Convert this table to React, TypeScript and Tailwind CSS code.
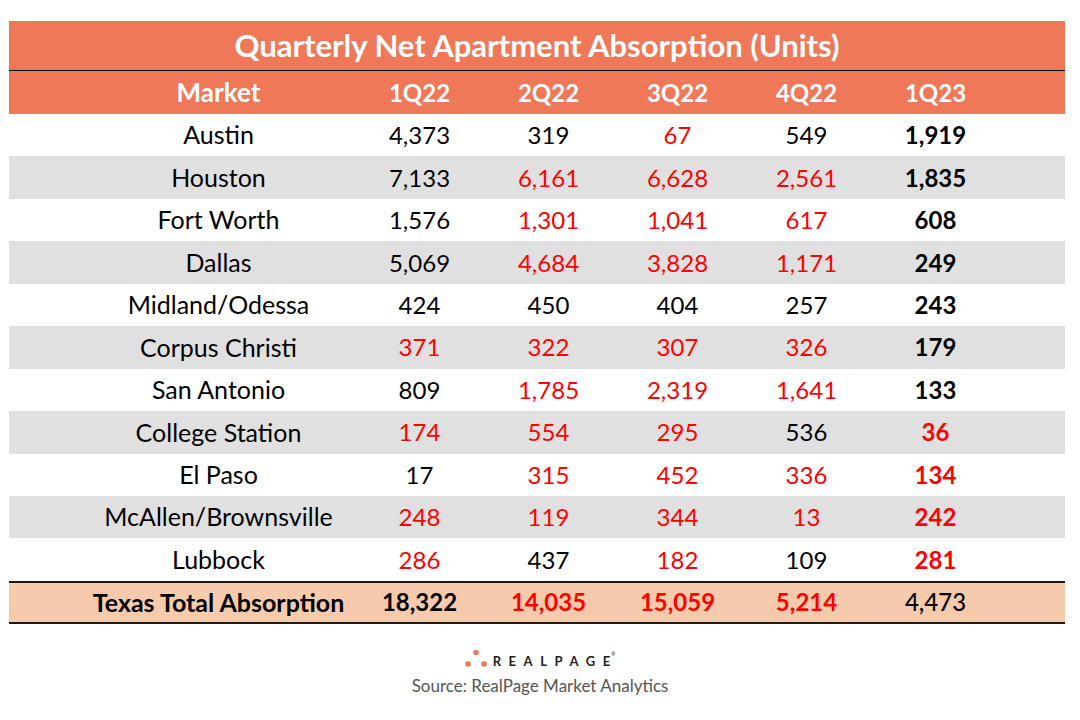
import React from "react";

type Cell = { v: string; red?: boolean };

const rows: { market: string; cells: Cell[]; last: Cell }[] = [
  { market: "Austin", cells: [{ v: "4,373" }, { v: "319" }, { v: "67", red: true }, { v: "549" }], last: { v: "1,919" } },
  { market: "Houston", cells: [{ v: "7,133" }, { v: "6,161", red: true }, { v: "6,628", red: true }, { v: "2,561", red: true }], last: { v: "1,835" } },
  { market: "Fort Worth", cells: [{ v: "1,576" }, { v: "1,301", red: true }, { v: "1,041", red: true }, { v: "617", red: true }], last: { v: "608" } },
  { market: "Dallas", cells: [{ v: "5,069" }, { v: "4,684", red: true }, { v: "3,828", red: true }, { v: "1,171", red: true }], last: { v: "249" } },
  { market: "Midland/Odessa", cells: [{ v: "424" }, { v: "450" }, { v: "404" }, { v: "257" }], last: { v: "243" } },
  { market: "Corpus Christi", cells: [{ v: "371", red: true }, { v: "322", red: true }, { v: "307", red: true }, { v: "326", red: true }], last: { v: "179" } },
  { market: "San Antonio", cells: [{ v: "809" }, { v: "1,785", red: true }, { v: "2,319", red: true }, { v: "1,641", red: true }], last: { v: "133" } },
  { market: "College Station", cells: [{ v: "174", red: true }, { v: "554", red: true }, { v: "295", red: true }, { v: "536" }], last: { v: "36", red: true } },
  { market: "El Paso", cells: [{ v: "17" }, { v: "315", red: true }, { v: "452", red: true }, { v: "336", red: true }], last: { v: "134", red: true } },
  { market: "McAllen/Brownsville", cells: [{ v: "248", red: true }, { v: "119", red: true }, { v: "344", red: true }, { v: "13", red: true }], last: { v: "242", red: true } },
  { market: "Lubbock", cells: [{ v: "286", red: true }, { v: "437" }, { v: "182", red: true }, { v: "109" }], last: { v: "281", red: true } },
];

const totals: Cell[] = [
  { v: "18,322" },
  { v: "14,035", red: true },
  { v: "15,059", red: true },
  { v: "5,214", red: true },
  { v: "4,473" },
];

const grid = "grid grid-cols-[73px_273px_129px_129px_129px_129px_129px_65px] items-center";

export default function App() {
  return (
    <div className="w-[1080px] h-[720px] bg-white pt-[21px] px-[9px] font-['Lato','Liberation_Sans',sans-serif] text-black">
      <div className="w-[1056px]">
        {/* title */}
        <div className="h-[50px] bg-[#ee7858] border-b border-black flex items-center justify-center text-white text-[31px] font-bold">
          Quarterly Net Apartment Absorption (Units)
        </div>
        {/* header */}
        <div className={`${grid} h-[43px] bg-[#ee7858] text-white text-[24px] font-bold text-center`}>
          <div />
          <div className="text-[26px]">Market</div>
          <div>1Q22</div>
          <div>2Q22</div>
          <div>3Q22</div>
          <div>4Q22</div>
          <div>1Q23</div>
          <div />
        </div>

        {rows.map((r, i) => (
          <div
            key={r.market}
            className={`${grid} h-[42.45px] text-[24px] text-center ${i % 2 === 1 ? "bg-[#e0e0e0]" : "bg-white"}`}
          >
            <div />
            <div className="text-[25px]">{r.market}</div>
            {r.cells.map((c, j) => (
              <div key={j} className={c.red ? "text-[#ff0000]" : ""}>
                {c.v}
              </div>
            ))}
            <div className={`font-bold ${r.last.red ? "text-[#ff0000]" : ""}`}>{r.last.v}</div>
            <div />
          </div>
        ))}

        {/* total */}
        <div className={`${grid} h-[43px] bg-[#f6cbac] border-y-2 border-[#1a1a1a] text-[24px] text-center`}>
          <div />
          <div className="font-bold text-[25px]">Texas Total Absorption</div>
          {totals.map((c, j) => (
            <div
              key={j}
              className={`${j < 4 ? "font-bold" : "font-medium"} ${c.red ? "text-[#ff0000]" : ""}`}
            >
              {c.v}
            </div>
          ))}
          <div />
        </div>
      </div>

      {/* footer */}
      <div className="flex flex-col items-center mt-[25px]">
        <div className="flex items-center">
          <svg width="22" height="18" viewBox="0 0 22 18" className="mr-[6px]">
            <circle cx="11" cy="3.5" r="2.8" fill="#ee7858" />
            <circle cx="3" cy="15" r="2.8" fill="#ee7858" />
            <circle cx="19" cy="15" r="2.8" fill="#ee7858" />
          </svg>
          <span className="text-[13px] font-bold text-[#222] leading-none pt-[6px]">
            <span className="tracking-[0.58em]">REALPAG</span>E
          </span>
          <span className="text-[5px] leading-none text-[#222] ml-[1px] self-start mt-[3px]">®</span>
        </div>
        <div className="text-[17px] text-[#555] mt-[5px]">Source: RealPage Market Analytics</div>
      </div>
    </div>
  );
}
